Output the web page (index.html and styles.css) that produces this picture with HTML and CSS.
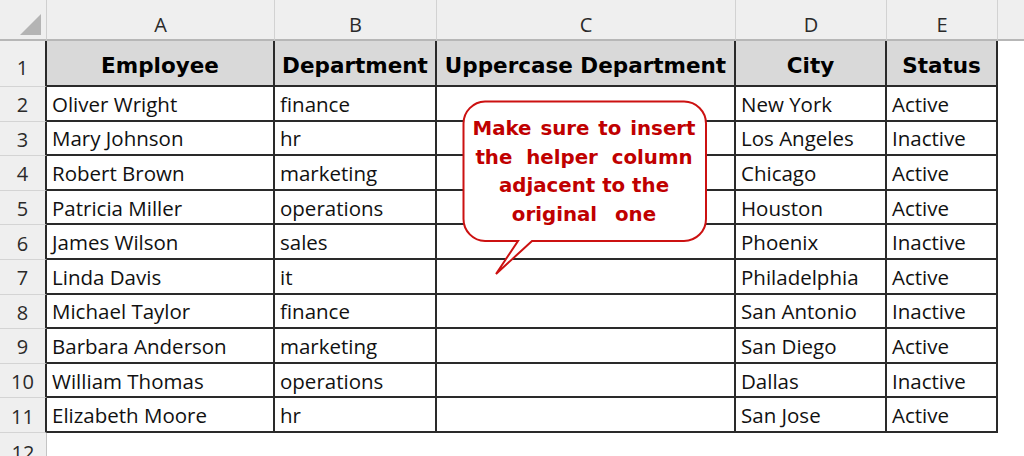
FILE: index.html
```html
<!DOCTYPE html>
<html>
<head>
<meta charset="utf-8">
<link rel="stylesheet" href="styles.css">
</head>
<body>
<div class="sheet">
  <div class="corner"><span class="tri"></span></div>
  <div class="colhdr">A</div>
  <div class="colhdr">B</div>
  <div class="colhdr">C</div>
  <div class="colhdr">D</div>
  <div class="colhdr">E</div>
  <div class="colhdr rest"></div>

  <div class="rowhdr head">1</div>
  <div class="cell th">Employee</div>
  <div class="cell th">Department</div>
  <div class="cell th">Uppercase Department</div>
  <div class="cell th">City</div>
  <div class="cell th">Status</div>
  <div class="blank"></div>

  <div class="rowhdr">2</div><div class="cell">Oliver Wright</div><div class="cell">finance</div><div class="cell"></div><div class="cell">New York</div><div class="cell">Active</div><div class="blank"></div>
  <div class="rowhdr">3</div><div class="cell">Mary Johnson</div><div class="cell">hr</div><div class="cell"></div><div class="cell">Los Angeles</div><div class="cell">Inactive</div><div class="blank"></div>
  <div class="rowhdr">4</div><div class="cell">Robert Brown</div><div class="cell">marketing</div><div class="cell"></div><div class="cell">Chicago</div><div class="cell">Active</div><div class="blank"></div>
  <div class="rowhdr">5</div><div class="cell">Patricia Miller</div><div class="cell">operations</div><div class="cell"></div><div class="cell">Houston</div><div class="cell">Active</div><div class="blank"></div>
  <div class="rowhdr">6</div><div class="cell">James Wilson</div><div class="cell">sales</div><div class="cell"></div><div class="cell">Phoenix</div><div class="cell">Inactive</div><div class="blank"></div>
  <div class="rowhdr">7</div><div class="cell">Linda Davis</div><div class="cell">it</div><div class="cell"></div><div class="cell">Philadelphia</div><div class="cell">Active</div><div class="blank"></div>
  <div class="rowhdr">8</div><div class="cell">Michael Taylor</div><div class="cell">finance</div><div class="cell"></div><div class="cell">San Antonio</div><div class="cell">Inactive</div><div class="blank"></div>
  <div class="rowhdr">9</div><div class="cell">Barbara Anderson</div><div class="cell">marketing</div><div class="cell"></div><div class="cell">San Diego</div><div class="cell">Active</div><div class="blank"></div>
  <div class="rowhdr">10</div><div class="cell">William Thomas</div><div class="cell">operations</div><div class="cell"></div><div class="cell">Dallas</div><div class="cell">Inactive</div><div class="blank"></div>
  <div class="rowhdr">11</div><div class="cell">Elizabeth Moore</div><div class="cell">hr</div><div class="cell"></div><div class="cell">San Jose</div><div class="cell">Active</div><div class="blank"></div>
  <div class="rowhdr last">12</div>
</div>

<div class="callout">
  <svg class="bubble" width="248" height="180" viewBox="0 0 248 180">
    <path d="M23,1.5 H222 A22,22 0 0 1 244,23.5 V119 A22,22 0 0 1 222,141 H70 L34,174 L56,141 H23 A22,22 0 0 1 1.5,119 V23.5 A22,22 0 0 1 23,1.5 Z" fill="#ffffff" stroke="#cc1111" stroke-width="2"/>
  </svg>
  <div class="callout-text">
    <span class="cl cl1">Make sure to insert</span>
    <span class="cl cl2">the helper column</span>
    <span class="cl cl3">adjacent to the</span>
    <span class="cl cl4">original one</span>
  </div>
</div>
</body>
</html>
```

FILE: styles.css
```css
html, body {
  margin: 0;
  padding: 0;
  background: #ffffff;
  overflow: hidden;
  width: 1024px;
  height: 456px;
}

body {
  position: relative;
  font-family: "Open Sans", "Noto Sans", sans-serif;
  color: #1a1a1a;
}

.sheet {
  display: grid;
  grid-template-columns: 47px 228px 162px 299px 151px 111px 1fr;
  grid-template-rows: 41px 46px repeat(10, 34.6px) 35px;
}

.corner {
  background: #efefef;
  border-right: 1px solid #cfcfcf;
  border-bottom: 2px solid #b7b7b7;
  position: relative;
}

.tri {
  position: absolute;
  left: 20px;
  top: 14px;
  width: 0;
  height: 0;
  border-left: 21px solid transparent;
  border-bottom: 21px solid #b4b4b4;
}

.colhdr {
  background: #efefef;
  border-right: 1px solid #d2d2d2;
  border-bottom: 2px solid #b7b7b7;
  display: flex;
  justify-content: center;
  align-items: center;
  padding-top: 10px;
  font-size: 20px;
  color: #2a2a2a;
}

.colhdr.rest {
  border-right: none;
}

.rowhdr {
  background: #efefef;
  border-bottom: 1px solid #d4d4d4;
  border-right: 2px solid #2a2a2a;
  display: flex;
  justify-content: center;
  align-items: center;
  font-size: 20px;
  color: #2a2a2a;
  padding-top: 2px;
}

.rowhdr.head {
  padding-top: 8px;
}

.rowhdr.last {
  border-right: 1px solid #c4c4c4;
  border-bottom: none;
  align-items: flex-start;
  padding-top: 6px;
}

.cell {
  border-right: 2px solid #2a2a2a;
  border-bottom: 2px solid #2a2a2a;
  display: flex;
  align-items: center;
  padding-left: 5px;
  padding-top: 1px;
  font-size: 20.5px;
  white-space: nowrap;
  color: #111111;
}

.cell.th {
  background: #d9d9d9;
  justify-content: center;
  padding-left: 0;
  padding-top: 4px;
  font-family: "DejaVu Sans", "Liberation Sans", sans-serif;
  font-weight: bold;
  font-size: 21.5px;
  color: #000000;
}

.blank {
  background: #ffffff;
}

.callout {
  position: absolute;
  left: 462px;
  top: 100px;
  width: 248px;
  height: 180px;
}

.bubble {
  position: absolute;
  left: 0;
  top: 0;
}

.callout-text {
  position: relative;
  width: 244px;
  padding-top: 15px;
  display: flex;
  flex-direction: column;
  align-items: center;
  font-family: "DejaVu Sans", "Liberation Sans", sans-serif;
  font-weight: bold;
  font-size: 19.8px;
  line-height: 28.5px;
  color: #c00000;
  white-space: nowrap;
}

.cl1 {
  word-spacing: 2px;
}

.cl2 {
  word-spacing: 7px;
}

.cl3 {
  word-spacing: 0;
}

.cl4 {
  word-spacing: 11px;
}
```
